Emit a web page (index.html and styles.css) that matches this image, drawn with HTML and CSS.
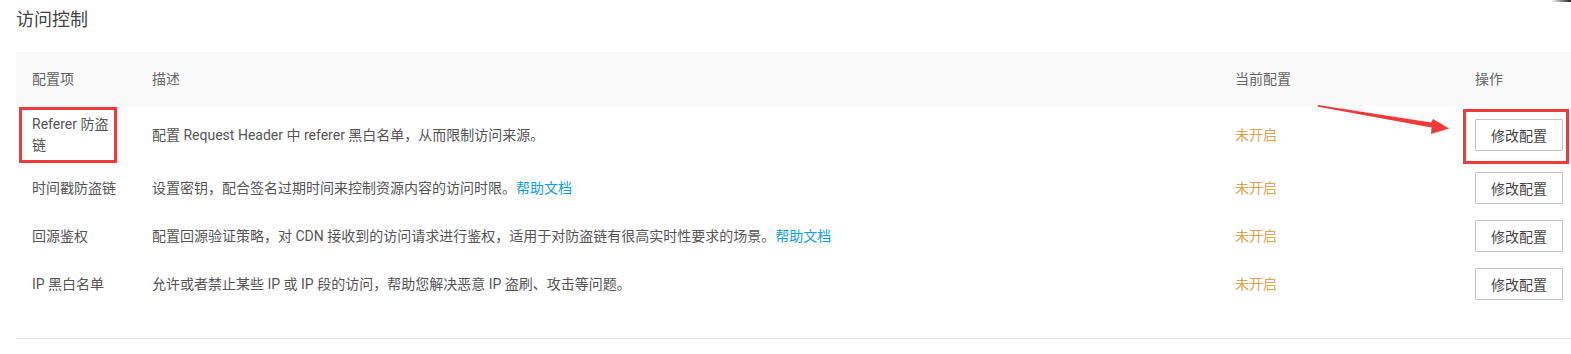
FILE: index.html
```html
<!DOCTYPE html>
<html lang="zh-CN">
<head>
<meta charset="utf-8">
<title>访问控制</title>
<link rel="stylesheet" href="styles.css">
</head>
<body>
<div class="page">
  <h2 class="title">访问控制</h2>
  <section class="panel">
    <table class="cfg">
      <colgroup>
        <col class="c1"><col class="c2"><col class="c3"><col class="c4">
      </colgroup>
      <thead>
        <tr><th>配置项</th><th>描述</th><th>当前配置</th><th>操作</th></tr>
      </thead>
      <tbody>
        <tr class="first">
          <td>Referer 防盗链</td>
          <td>配置 Request Header 中 referer 黑白名单，从而限制访问来源。</td>
          <td class="off">未开启</td>
          <td><button class="btn">修改配置</button></td>
        </tr>
        <tr>
          <td>时间戳防盗链</td>
          <td>设置密钥，配合签名过期时间来控制资源内容的访问时限。<a class="link">帮助文档</a></td>
          <td class="off">未开启</td>
          <td><button class="btn">修改配置</button></td>
        </tr>
        <tr>
          <td>回源鉴权</td>
          <td>配置回源验证策略，对 CDN 接收到的访问请求进行鉴权，适用于对防盗链有很高实时性要求的场景。<a class="link">帮助文档</a></td>
          <td class="off">未开启</td>
          <td><button class="btn">修改配置</button></td>
        </tr>
        <tr>
          <td>IP 黑白名单</td>
          <td>允许或者禁止某些 IP 或 IP 段的访问，帮助您解决恶意 IP 盗刷、攻击等问题。</td>
          <td class="off">未开启</td>
          <td><button class="btn">修改配置</button></td>
        </tr>
      </tbody>
    </table>
  </section>

  <div class="mark mark-left"></div>
  <div class="mark mark-right"></div>
  <svg class="arrow" width="1571" height="354" viewBox="0 0 1571 354">
    <polygon points="1318,105 1431,122.5 1433,119 1449,128.5 1431,134 1431.5,127.5 1318,106.8" fill="#f03a3a"/>
  </svg>
  <div class="corner"></div>
</div>
</body>
</html>
```

FILE: styles.css
```css
html, body {
  margin: 0;
  padding: 0;
  background: #fff;
}

.page {
  position: relative;
  width: 1571px;
  height: 354px;
  overflow: hidden;
  font-family: Roboto, "Noto Sans CJK SC", sans-serif;
  font-size: 14px;
  color: #555;
}

.title {
  margin: 0;
  padding: 8px 0 0 16px;
  height: 24px;
  line-height: 24px;
  font-size: 18px;
  font-weight: normal;
  color: #444;
}

.panel {
  margin: 20px 0 0 16px;
  padding-bottom: 30px;
  border-bottom: 1px solid #e5e5e5;
}

.cfg {
  width: 1555px;
  table-layout: fixed;
  border-collapse: collapse;
  border-spacing: 0;
}

.c1 { width: 120px; }
.c2 { width: 1083px; }
.c3 { width: 240px; }
.c4 { width: 112px; }

.cfg th {
  height: 54px;
  padding: 0 16px;
  background: #f9f9f9;
  text-align: left;
  font-weight: normal;
  color: #666;
  line-height: 21px;
}

.cfg td {
  padding: 8px 16px;
  line-height: 21px;
  height: 32px;
  vertical-align: middle;
  text-align: left;
}

.cfg tr.first td {
  height: 42px;
}

.off {
  color: #dca34f;
}

.link {
  color: #0a9fe6;
  cursor: pointer;
}

.btn {
  display: block;
  box-sizing: border-box;
  width: 88px;
  height: 32px;
  padding: 0;
  border: 1px solid #c4c4c4;
  border-radius: 1px;
  background: #fff;
  font-family: Roboto, "Noto Sans CJK SC", sans-serif;
  font-size: 14px;
  color: #444;
  cursor: pointer;
}

.mark {
  position: absolute;
  box-sizing: border-box;
  border: 3px solid #f03a3a;
}

.mark-left {
  left: 19px;
  top: 107px;
  width: 98px;
  height: 56px;
}

.mark-right {
  left: 1463px;
  top: 109px;
  width: 106px;
  height: 55px;
}

.arrow {
  position: absolute;
  left: 0;
  top: 0;
  pointer-events: none;
}

.corner {
  position: absolute;
  right: 0;
  top: 0;
  width: 20px;
  height: 2px;
  background: linear-gradient(to right, rgba(0,0,0,0), #222);
}
```
